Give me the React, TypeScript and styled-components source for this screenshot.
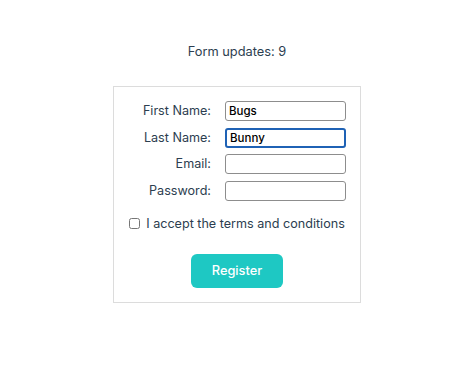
import React, { useState } from 'react';
import styled, { createGlobalStyle } from 'styled-components';

const GlobalStyle = createGlobalStyle`
  body {
    margin: 0;
    font-family: Inter, "Noto Sans", sans-serif;
    color: #2c3e50;
    background: #fff;
  }
`;

const Page = styled.div`
  display: flex;
  flex-direction: column;
  align-items: center;
  padding-top: 42px;
`;

const Counter = styled.div`
  font-size: 12.8px;
  line-height: 20px;
  margin-bottom: 24px;
`;

const Form = styled.form`
  width: 248px;
  box-sizing: border-box;
  border: 1px solid #dcdcdc;
  padding: 14px 14px 14px;
  display: flex;
  flex-direction: column;
  align-items: center;
`;

const Fields = styled.div`
  width: 100%;
  display: grid;
  grid-template-columns: 1fr 121px;
  column-gap: 14px;
  row-gap: 6.5px;
  align-items: center;
`;

const Label = styled.label`
  text-align: right;
  font-size: 12.6px;
  line-height: 20px;
`;

const Input = styled.input<{ $focused?: boolean }>`
  box-sizing: border-box;
  width: 121px;
  height: 20px;
  margin: 0;
  padding: 0 3px;
  font-family: Inter, "Noto Sans", sans-serif;
  font-size: 11.5px;
  font-weight: 500;
  color: #000;
  border: ${(p) => (p.$focused ? '2px solid #1f62b5' : '1px solid #8d8d8d')};
  border-radius: 3px;
  outline: none;
`;

const Terms = styled.label`
  display: flex;
  align-items: center;
  gap: 6px;
  margin-top: 13px;
  font-size: 12.6px;
  line-height: 20px;
  white-space: nowrap;
`;

const Check = styled.input`
  width: 11px;
  height: 11px;
  margin: 0;
`;

const Button = styled.button`
  margin-top: 20px;
  width: 92px;
  height: 34px;
  border: none;
  border-radius: 6px;
  background: #1ec8c3;
  color: #fff;
  font-family: Inter, "Noto Sans", sans-serif;
  font-size: 12.8px;
  font-weight: 500;
  cursor: pointer;
`;

export default function App() {
  const [first, setFirst] = useState('Bugs');
  const [last, setLast] = useState('Bunny');
  const [email, setEmail] = useState('');
  const [password, setPassword] = useState('');

  return (
    <>
      <GlobalStyle />
      <Page>
        <Counter>Form updates: 9</Counter>
        <Form onSubmit={(e) => e.preventDefault()}>
          <Fields>
            <Label>First Name:</Label>
            <Input value={first} onChange={(e) => setFirst(e.target.value)} />
            <Label>Last Name:</Label>
            <Input $focused value={last} onChange={(e) => setLast(e.target.value)} />
            <Label>Email:</Label>
            <Input value={email} onChange={(e) => setEmail(e.target.value)} />
            <Label>Password:</Label>
            <Input type="password" value={password} onChange={(e) => setPassword(e.target.value)} />
          </Fields>
          <Terms>
            <Check type="checkbox" />
            I accept the terms and conditions
          </Terms>
          <Button type="submit">Register</Button>
        </Form>
      </Page>
    </>
  );
}
